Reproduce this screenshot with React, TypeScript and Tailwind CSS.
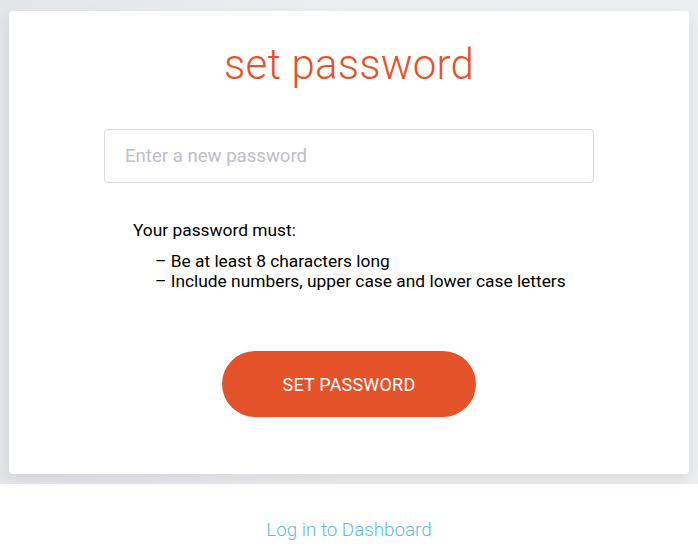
import React from "react";

export default function App() {
  return (
    <div className="w-[698px] h-[554px] bg-white overflow-hidden" style={{ fontFamily: "Roboto, 'Liberation Sans', sans-serif" }}>
      <div className="bg-gradient-to-r from-[#e4e5e9] via-[#eceef0] to-[#eceef0] pt-[11px] px-[9px] pb-[10px]">
        <div className="bg-white rounded-[4px] shadow-[0_6px_14px_rgba(0,0,0,0.08)] h-[463px] flex flex-col items-center">
          <h1 className="mt-[28px] text-[42px] leading-[52px] font-light text-[#e4522a] tracking-[0.2px]">set password</h1>
          <input
            type="password"
            placeholder="Enter a new password"
            className="mt-[38px] w-[490px] h-[54px] border border-[#d9dadf] rounded-[4px] px-[20px] text-[18.6px] text-gray-800 placeholder:text-[#bdbec6] outline-none"
          />
          <div className="self-start ml-[124px] mt-[37px] text-[17.35px] leading-[20px] text-black">
            <p>Your password must:</p>
            <ul className="mt-[11px] ml-[22px]">
              <li>– Be at least 8 characters long</li>
              <li>– Include numbers, upper case and lower case letters</li>
            </ul>
          </div>
          <button className="mt-[60px] w-[254px] h-[66px] rounded-full bg-[#e4522a] text-white text-[18px] tracking-[0.2px]">
            SET PASSWORD
          </button>
        </div>
      </div>
      <div className="flex justify-center mt-[32px]">
        <a className="text-[18.8px] font-light text-[#5bbbe2]">Log in to Dashboard</a>
      </div>
    </div>
  );
}
